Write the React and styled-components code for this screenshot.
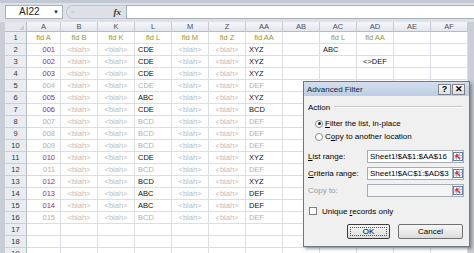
import React from "react";
import styled, { createGlobalStyle } from "styled-components";

const GlobalStyle = createGlobalStyle`
  html, body {
    margin: 0;
    padding: 0;
    background: #fff;
    overflow: hidden;
  }
  body {
    font-family: "Liberation Sans", Arial, sans-serif;
  }
`;

const Window = styled.div`
  position: relative;
  width: 474px;
  height: 253px;
  overflow: hidden;
  background: #dde1e7;
  display: flex;
  flex-direction: column;
`;

const TopStrip = styled.div`
  height: 3px;
  flex: none;
  background: #c3c9d2;
`;

const FormulaBar = styled.div`
  height: 17px;
  flex: none;
  display: flex;
  align-items: center;
  padding-left: 5px;
  margin-bottom: 2px;
`;

const NameBox = styled.div`
  width: 58px;
  height: 14px;
  box-sizing: border-box;
  background: #fff;
  border: 1px solid #a7afba;
  display: flex;
  align-items: center;
  padding-left: 13px;
  font-size: 10px;
  color: #222;
`;

const Caret = styled.span`
  margin-left: auto;
  margin-right: 3px;
  font-size: 6px;
  color: #333;
`;

const FxPill = styled.div`
  margin-left: 3px;
  width: 60px;
  height: 14px;
  box-sizing: border-box;
  border: 1px solid #c0c6cf;
  border-right: none;
  border-radius: 7px 0 0 7px;
  display: flex;
  align-items: center;
  padding-left: 4px;
`;

const FxDim = styled.span`
  font-size: 6px;
  color: #b5bbc4;
`;

const Fx = styled.span`
  margin-left: auto;
  margin-right: 5px;
  font-family: "Liberation Serif", serif;
  font-style: italic;
  font-weight: bold;
  font-size: 9px;
  color: #333;
`;

const FormulaInput = styled.div`
  flex: 1;
  height: 14px;
  box-sizing: border-box;
  background: #fff;
  border: 1px solid #a7afba;
  border-right: none;
`;

const Sheet = styled.div`
  flex: 1;
  display: flex;
  min-height: 0;
`;

const Edge = styled.div`
  width: ${(p) => p.$w}px;
  flex: none;
  background: #c9ced6;
`;

const Grid = styled.div`
  display: grid;
  grid-template-columns: 22px 34px repeat(11, 37px);
  grid-template-rows: 10px;
  grid-auto-rows: 12px;
  background: #fff;
  font-size: 7.5px;
`;

const Corner = styled.div`
  position: relative;
  box-sizing: border-box;
  background: #e4e8ee;
  border-right: 1px solid #b5bcc6;
  border-bottom: 1px solid #b5bcc6;

  &::after {
    content: "";
    position: absolute;
    right: 2px;
    bottom: 1px;
    border-left: 5px solid transparent;
    border-bottom: 5px solid #c4cad3;
  }
`;

const ColHead = styled.div`
  box-sizing: border-box;
  display: flex;
  align-items: center;
  justify-content: center;
  background: linear-gradient(#f4f6f9, #e3e7ed);
  border-right: 1px solid #c6ccd5;
  border-bottom: 1px solid #b5bcc6;
  color: #4a4f57;
`;

const RowHead = styled.div`
  box-sizing: border-box;
  display: flex;
  align-items: center;
  justify-content: center;
  background: #e9edf2;
  border-right: 1px solid #b5bcc6;
  border-bottom: 1px solid #c9cfd7;
  color: #333;
`;

const tones = {
  head: "#96963e",
  num: "#8a2c9c",
  dim: "#b0b0b0",
  blah: "#bcbcbc",
  text: "#111",
};

const Cell = styled.div`
  box-sizing: border-box;
  display: flex;
  align-items: center;
  justify-content: ${(p) =>
    p.$align === "right" ? "flex-end" : p.$align === "left" ? "flex-start" : "center"};
  padding: 0 ${(p) => (p.$align === "right" ? "5px" : "3px")};
  border-right: 1px solid #dadee5;
  border-bottom: 1px solid #dadee5;
  white-space: nowrap;
  overflow: hidden;
  color: ${(p) => tones[p.$tone] || "#111"};
`;

/* dialog */

const Dialog = styled.div`
  position: absolute;
  left: 303px;
  top: 81px;
  width: 167px;
  height: 166px;
  box-sizing: border-box;
  background: #f0f0f0;
  border: 1px solid #6f7782;
  box-shadow: 2px 2px 3px rgba(0, 0, 0, 0.35);
  font-size: 8px;
  color: #000;
  display: flex;
  flex-direction: column;
`;

const TitleBar = styled.div`
  height: 14px;
  flex: none;
  display: flex;
  align-items: center;
  padding-left: 3px;
  background: linear-gradient(#d3dfee, #bccde2);
  font-size: 8px;
  color: #14233d;
`;

const TitleButtons = styled.div`
  margin-left: auto;
  margin-right: 4px;
  display: flex;
  gap: 1px;
`;

const TitleButton = styled.div`
  width: 13px;
  height: 11px;
  box-sizing: border-box;
  display: flex;
  align-items: center;
  justify-content: center;
  background: linear-gradient(#f8f8f8, #dedede);
  border: 1px solid #7c8590;
  font-weight: bold;
  font-size: 9px;
  color: #000;
`;

const Body = styled.div`
  display: flex;
  flex-direction: column;
  padding: 0 6px 0 4px;
`;

const GroupLabel = styled.div`
  margin-top: 6px;
  height: 10px;
  display: flex;
  align-items: center;
  gap: 4px;

  &::after {
    content: "";
    flex: 1;
    height: 1px;
    background: #c9c9c9;
    border-bottom: 1px solid #fff;
  }
`;

const RadioRow = styled.div`
  height: 13px;
  display: flex;
  align-items: center;
  gap: 2px;
  padding-left: 7px;
  margin-top: ${(p) => p.$first ? "5px" : "0"};
`;

const Radio = styled.span`
  width: 8px;
  height: 8px;
  box-sizing: border-box;
  border-radius: 50%;
  border: 1px solid #8c8c8c;
  background: #fff;
  display: flex;
  align-items: center;
  justify-content: center;

  &::after {
    content: "";
    width: 3px;
    height: 3px;
    border-radius: 50%;
    background: ${(p) => (p.$checked ? "#1a1a1a" : "transparent")};
  }
`;

const Fields = styled.div`
  margin-top: 5px;
  display: grid;
  grid-template-columns: 59px 85px 12px;
  grid-auto-rows: 17px;
  align-items: center;
`;

const FieldLabel = styled.span`
  color: ${(p) => (p.$disabled ? "#9a9a9a" : "#000")};
  white-space: nowrap;
`;

const Input = styled.div`
  height: 13px;
  box-sizing: border-box;
  display: flex;
  align-items: center;
  padding-left: 2px;
  background: ${(p) => (p.$disabled ? "#f4f4f4" : "#fff")};
  border: 1px solid #a6adb6;
  border-right: none;
  white-space: nowrap;
  overflow: hidden;
`;

const Collapse = styled.div`
  height: 13px;
  box-sizing: border-box;
  display: flex;
  align-items: center;
  justify-content: center;
  border: 1px solid #a6adb6;
  background: ${(p) => (p.$disabled ? "#f4f4f4" : "#fff")};
`;

const CheckRow = styled.div`
  margin-top: 7px;
  height: 10px;
  display: flex;
  align-items: center;
  gap: 5px;
  padding-left: 1px;
`;

const CheckBox = styled.span`
  width: 8px;
  height: 8px;
  box-sizing: border-box;
  border: 1px solid #7f7f7f;
  background: #fff;
`;

const Buttons = styled.div`
  margin-top: 8px;
  display: flex;
  padding-left: 39px;
  gap: 8px;
`;

const Button = styled.div`
  width: ${(p) => p.$w}px;
  height: 15px;
  box-sizing: border-box;
  display: flex;
  align-items: center;
  justify-content: center;
  border-radius: 2px;
  border: 1px solid ${(p) => (p.$default ? "#3c3c3c" : "#707070")};
  background: linear-gradient(#f7f7f7, #dcdcdc);
  position: relative;

  ${(p) =>
    p.$default &&
    `&::before {
      content: "";
      position: absolute;
      inset: 2px;
      border: 1px dotted #555;
    }`}
`;

function RangeIcon() {
  return (
    <svg width="10" height="9" viewBox="0 0 10 9">
      <rect x="0.5" y="0.5" width="9" height="8" fill="#fff" stroke="#5b7fb5" />
      <path d="M0.5 3.5H9.5M0.5 6H9.5M3.5 0.5V8.5M6.5 0.5V8.5" stroke="#9fb5d6" strokeWidth="0.8" />
      <path d="M7 7L3.5 3.5M3 3H5.5M3 3V5.5" stroke="#e0303a" strokeWidth="1.4" fill="none" />
    </svg>
  );
}

const cols = ["A", "B", "K", "L", "M", "Z", "AA", "AB", "AC", "AD", "AE", "AF"];

const headRow = ["fld A", "fld B", "fld K", "fld L", "fld M", "fld Z", "fld AA", "", "fld L", "fld AA", "", ""];

const records = [
  ["001", "CDE", "XYZ", true],
  ["002", "CDE", "XYZ", true],
  ["003", "CDE", "XYZ", true],
  ["004", "CDE", "DEF", false],
  ["005", "ABC", "XYZ", true],
  ["006", "CDE", "BCD", true],
  ["007", "BCD", "DEF", false],
  ["008", "BCD", "DEF", false],
  ["009", "BCD", "DEF", false],
  ["010", "CDE", "XYZ", true],
  ["011", "BCD", "DEF", false],
  ["012", "BCD", "XYZ", true],
  ["013", "ABC", "DEF", true],
  ["014", "ABC", "DEF", true],
  ["015", "BCD", "DEF", false],
];

function recordCells(rec, rowNo) {
  const [id, l, aa, on] = rec;
  const dim = on ? "text" : "dim";
  return [
    { v: id, a: "right", t: on ? "num" : "dim" },
    { v: "<blah>", t: "blah" },
    { v: "<blah>", t: "blah" },
    { v: l, a: "left", t: dim },
    { v: "<blah>", t: "blah" },
    { v: "<blah>", t: "blah" },
    { v: aa, a: "left", t: dim },
    { v: "" },
    { v: rowNo === 2 ? "ABC" : "", a: "left", t: "text" },
    { v: rowNo === 3 ? "<>DEF" : "", t: "text" },
    { v: "" },
    { v: "" },
  ];
}

function buildRows() {
  const rows = [{ no: 1, cells: headRow.map((v) => ({ v, t: "head" })) }];
  records.forEach((rec, i) => rows.push({ no: i + 2, cells: recordCells(rec, i + 2) }));
  for (let n = 17; n <= 19; n++) rows.push({ no: n, cells: cols.map(() => ({ v: "" })) });
  return rows;
}

export default function App() {
  const rows = buildRows();

  return (
    <>
      <GlobalStyle />
      <Window>
        <TopStrip />
        <FormulaBar>
          <NameBox>
            AI22
            <Caret>▼</Caret>
          </NameBox>
          <FxPill>
            <FxDim>≈</FxDim>
            <Fx>fx</Fx>
          </FxPill>
          <FormulaInput />
        </FormulaBar>

        <Sheet>
          <Edge $w={5} />
          <Grid>
            <Corner />
            {cols.map((c) => (
              <ColHead key={c}>{c}</ColHead>
            ))}
            {rows.map((r) => (
              <React.Fragment key={r.no}>
                <RowHead>{r.no}</RowHead>
                {r.cells.map((c, i) => (
                  <Cell key={i} $align={c.a} $tone={c.t}>
                    {c.v}
                  </Cell>
                ))}
              </React.Fragment>
            ))}
          </Grid>
          <Edge $w={6} />
        </Sheet>

        <Dialog>
          <TitleBar>
            Advanced Filter
            <TitleButtons>
              <TitleButton>?</TitleButton>
              <TitleButton>✕</TitleButton>
            </TitleButtons>
          </TitleBar>
          <Body>
            <GroupLabel>Action</GroupLabel>
            <RadioRow $first>
              <Radio $checked />
              <span>
                <u>F</u>ilter the list, in-place
              </span>
            </RadioRow>
            <RadioRow>
              <Radio />
              <span>
                C<u>o</u>py to another location
              </span>
            </RadioRow>

            <Fields>
              <FieldLabel>
                <u>L</u>ist range:
              </FieldLabel>
              <Input>Sheet1!$A$1:$AA$16</Input>
              <Collapse>
                <RangeIcon />
              </Collapse>

              <FieldLabel>
                <u>C</u>riteria range:
              </FieldLabel>
              <Input>Sheet1!$AC$1:$AD$3</Input>
              <Collapse>
                <RangeIcon />
              </Collapse>

              <FieldLabel $disabled>Copy to:</FieldLabel>
              <Input $disabled />
              <Collapse $disabled>
                <RangeIcon />
              </Collapse>
            </Fields>

            <CheckRow>
              <CheckBox />
              <span>
                Unique <u>r</u>ecords only
              </span>
            </CheckRow>

            <Buttons>
              <Button $w={43} $default>
                OK
              </Button>
              <Button $w={65}>Cancel</Button>
            </Buttons>
          </Body>
        </Dialog>
      </Window>
    </>
  );
}
